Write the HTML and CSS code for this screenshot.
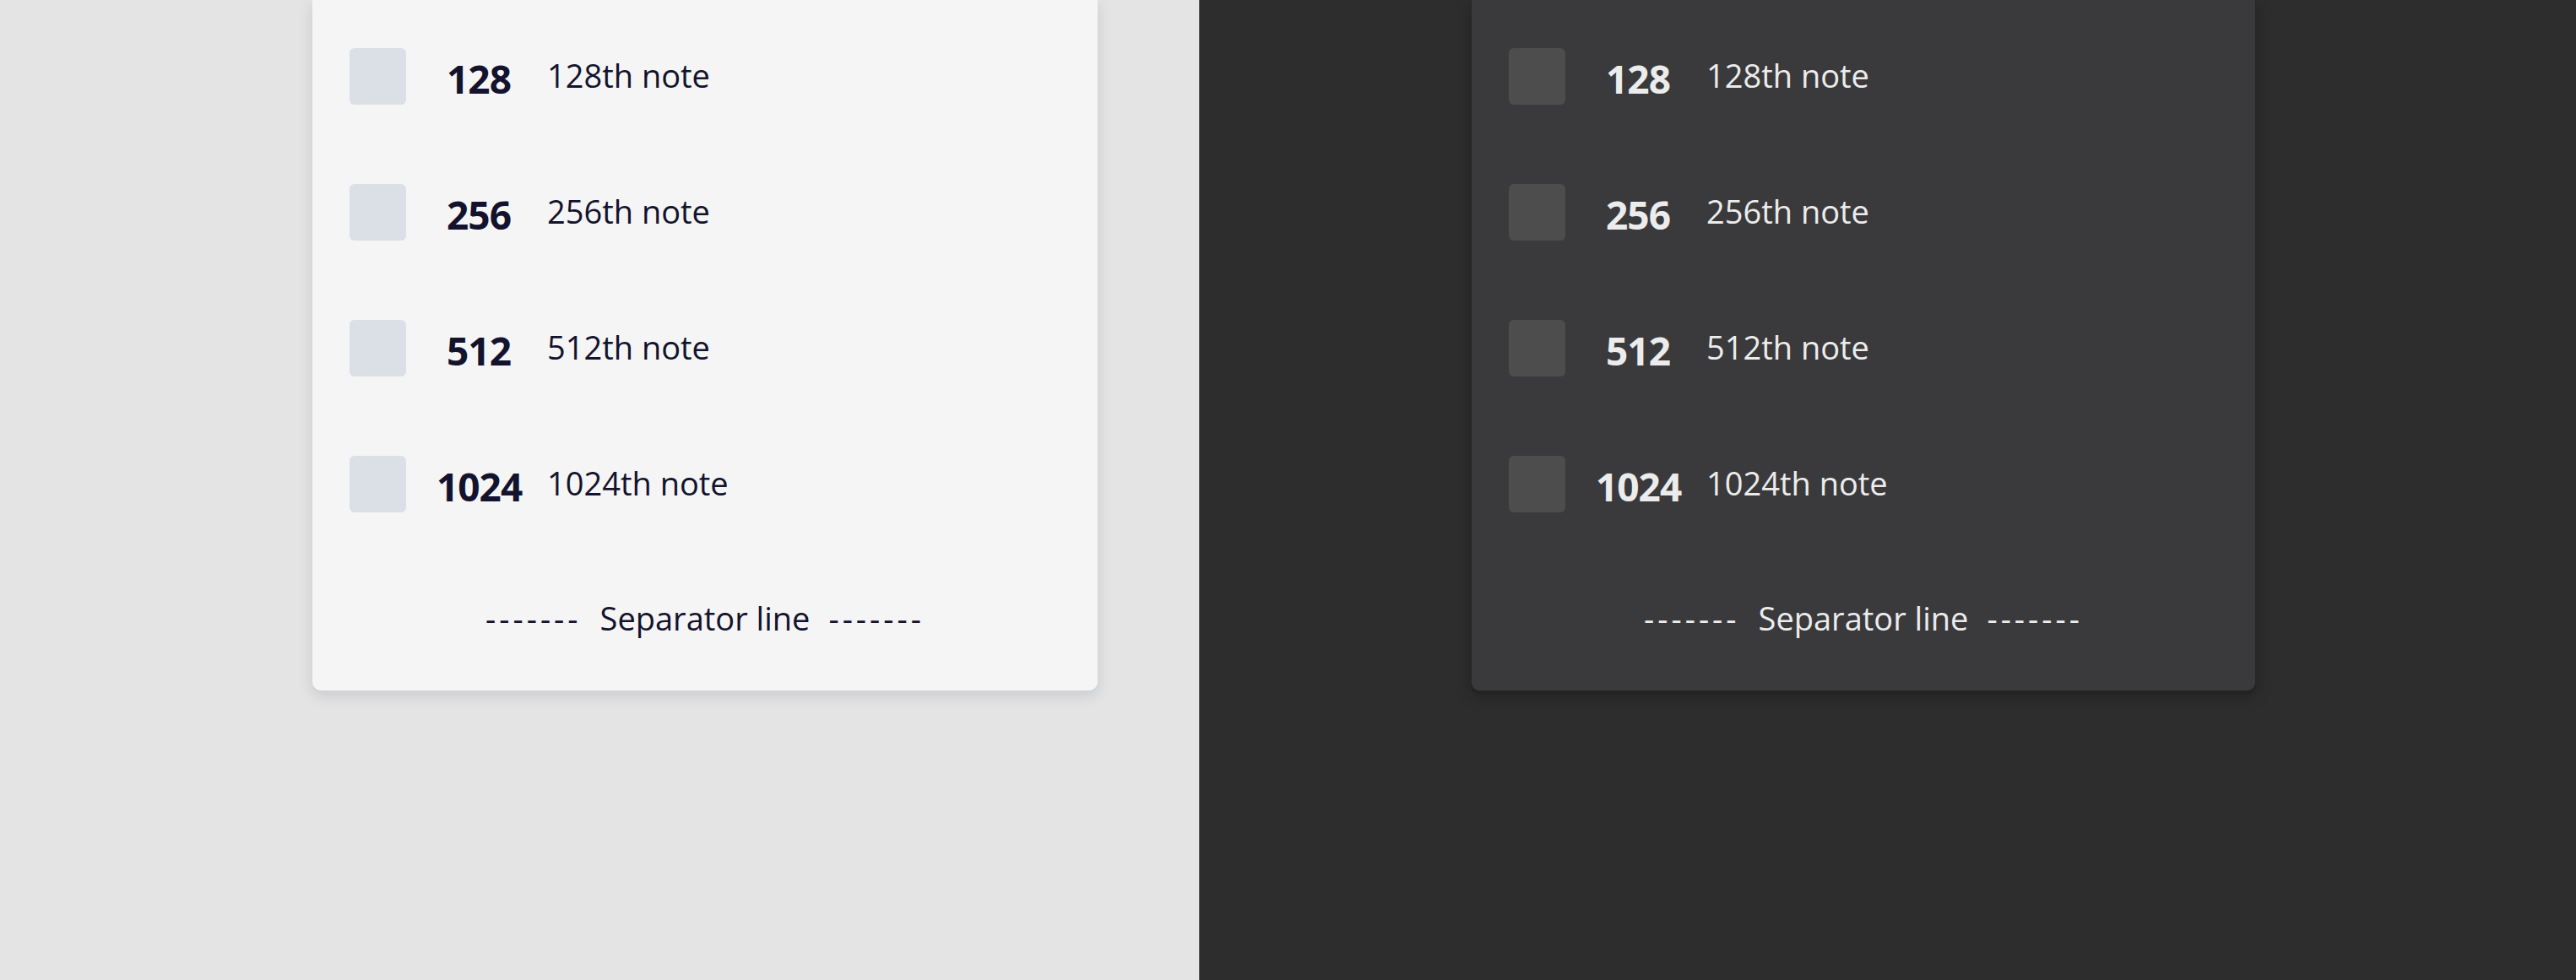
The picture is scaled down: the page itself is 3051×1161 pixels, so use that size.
FILE: index.html
```html
<!DOCTYPE html>
<html lang="en">
<head>
    <meta charset="UTF-8">
    <meta name="viewport" content="width=device-width, initial-scale=1.0">
    <title>Note values</title>
    <link rel="stylesheet" href="styles.css">
</head>
<body>

    <div class="page">
        <div class="pane light">
            <div class="card">
                <div class="row">
                    <span class="box"></span>
                    <span class="num">128</span>
                    <span class="label">128th note</span>
                </div>
                <div class="row">
                    <span class="box"></span>
                    <span class="num">256</span>
                    <span class="label">256th note</span>
                </div>
                <div class="row">
                    <span class="box"></span>
                    <span class="num">512</span>
                    <span class="label">512th note</span>
                </div>
                <div class="row">
                    <span class="box"></span>
                    <span class="num">1024</span>
                    <span class="label">1024th note</span>
                </div>
                <div class="row sep">
                    <span class="dash">-------</span>
                    <span>Separator line</span>
                    <span class="dash">-------</span>
                </div>
            </div>
        </div>

        <div class="pane dark">
            <div class="card">
                <div class="row">
                    <span class="box"></span>
                    <span class="num">128</span>
                    <span class="label">128th note</span>
                </div>
                <div class="row">
                    <span class="box"></span>
                    <span class="num">256</span>
                    <span class="label">256th note</span>
                </div>
                <div class="row">
                    <span class="box"></span>
                    <span class="num">512</span>
                    <span class="label">512th note</span>
                </div>
                <div class="row">
                    <span class="box"></span>
                    <span class="num">1024</span>
                    <span class="label">1024th note</span>
                </div>
                <div class="row sep">
                    <span class="dash">-------</span>
                    <span>Separator line</span>
                    <span class="dash">-------</span>
                </div>
            </div>
        </div>
    </div>

</body>
</html>
```

FILE: styles.css
```css
html, body {
    margin: 0;
    height: 100%;
}

body {
    font-family: "Open Sans", "Noto Sans", sans-serif;
    overflow: hidden;
}

.page {
    display: grid;
    grid-template-columns: 1420px 1fr;
    height: 100%;
}

.light {
    background: #e4e4e4;
    padding-left: 370px;
    color: #13132e;
}

.dark {
    background: #2d2d2e;
    border-left: 1px solid #5c5c5c;
    padding-left: 321px;
    color: #ececec;
}

.card {
    width: 930px;
    box-sizing: border-box;
    padding: 10px 44px 3px;
    border-radius: 0 0 10px 10px;
}

.light .card {
    background: #f5f5f5;
    box-shadow: 0 3px 0 #d0d5da, 0 6px 18px rgba(0, 0, 0, 0.12);
}

.dark .card {
    background: #3a3a3c;
    border: 1px solid #262627;
    border-top: none;
    box-shadow: 0 3px 0 #232324, 0 6px 18px rgba(0, 0, 0, 0.25);
}

.row {
    display: flex;
    align-items: center;
    height: 161px;
    box-sizing: border-box;
}

.box {
    width: 67px;
    height: 67px;
    border-radius: 6px;
    flex: none;
}

.light .box {
    background: #dbdfe6;
}

.dark .box {
    background: #4d4d4d;
}

.num {
    width: 100px;
    margin-left: 36px;
    text-align: center;
    font-size: 46px;
    font-weight: 700;
    letter-spacing: -1px;
    padding-top: 5px;
}

.label {
    margin-left: 31px;
    font-size: 38px;
    padding-bottom: 3px;
}

.sep {
    justify-content: center;
    gap: 22px;
    font-size: 38px;
    padding-bottom: 6px;
}

.dash {
    letter-spacing: 4px;
}
```
